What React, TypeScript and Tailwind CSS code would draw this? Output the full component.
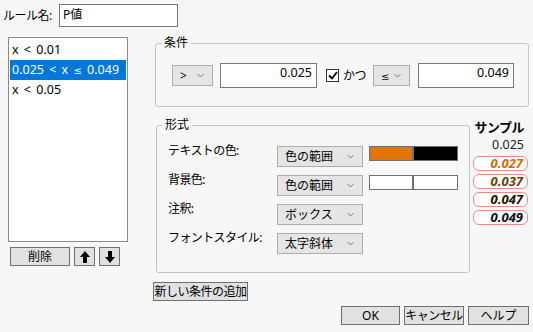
import React from "react";

const font = { fontFamily: '"Noto Sans", "Noto Sans CJK JP", sans-serif' };

const Chevron = () => (
  <svg width="7" height="5" viewBox="0 0 7 5" className="shrink-0">
    <path d="M0.5 1 L3.5 4 L6.5 1" fill="none" stroke="#7a7a7a" strokeWidth="1" />
  </svg>
);

const Le = () => <span className="font-['DejaVu_Sans'] text-[10px]">≤</span>;

const Select = ({ label, w }: { label: React.ReactNode; w: string }) => (
  <div
    className={`${w} h-[21px] flex items-center justify-between pl-[7px] pr-[8px] bg-[#e5e5e5] border border-[#adadad] text-[12px] leading-none text-black`}
  >
    <span>{label}</span>
    <Chevron />
  </div>
);

const Arrow = ({ down }: { down?: boolean }) => (
  <svg width="10" height="12" viewBox="0 0 10 12" className={down ? "rotate-180" : ""}>
    <path d="M5 0 L10 6 L7 6 L7 12 L3 12 L3 6 L0 6 Z" fill="#000" />
  </svg>
);

const Btn = ({ children, w }: { children: React.ReactNode; w: string }) => (
  <div
    className={`${w} h-[19px] flex items-center justify-center bg-[#e1e1e1] border border-[#707070] text-[12px] leading-none text-black`}
  >
    {children}
  </div>
);

const samples = [
  { v: "0.027", c: "text-[#d46a00]" },
  { v: "0.037", c: "text-[#6e3c05]" },
  { v: "0.047", c: "text-[#1a1005]" },
  { v: "0.049", c: "text-[#0a0a1a]" },
];

export default function App() {
  return (
    <div style={font} className="w-[533px] h-[332px] bg-[#f7f7f7] text-[12px] text-black overflow-hidden">
      {/* rule name */}
      <div className="flex items-center pt-[4px] pl-[3px]">
        <span className="w-[56px] tracking-[-0.5px]">ルール名:</span>
        <div className="w-[119px] h-[23px] bg-white border border-[#7a7a7a] pl-[3px] leading-[19px]">P値</div>
      </div>

      <div className="flex mt-[10px]">
        {/* left column */}
        <div className="ml-[8px] w-[120px]">
          <div className="h-[205px] bg-white border border-[#8a8a8a] p-[1px] pt-[2px] text-[12.5px] [word-spacing:2px]">
            <div className="h-[20px] leading-[20px] pl-[2px]">x &lt; 0.01</div>
            <div className="h-[20px] leading-[20px] pl-[2px] bg-[#0078d7] text-white">
              0.025 &lt; x <Le /> 0.049
            </div>
            <div className="h-[20px] leading-[20px] pl-[2px]">x &lt; 0.05</div>
          </div>
          <div className="flex items-center mt-[5px] ml-[2px] gap-[4px]">
            <Btn w="w-[60px]">削除</Btn>
            <div className="w-[21px] h-[19px] flex items-center justify-center bg-[#e1e1e1] border border-[#707070]">
              <Arrow />
            </div>
            <div className="w-[21px] h-[19px] flex items-center justify-center bg-[#e1e1e1] border border-[#707070]">
              <Arrow down />
            </div>
          </div>
        </div>

        {/* right column */}
        <div className="ml-[27px] w-[374px] -mt-[2px]">
          <fieldset className="border border-[#c6c6c6] rounded-[3px] h-[72px]">
            <legend className="ml-[5px] px-[3px] leading-[16px]">条件</legend>
            <div className="flex items-center mt-[12px] ml-[16px]">
              <Select label=">" w="w-[41px]" />
              <div className="ml-[7px] w-[97px] h-[25px] bg-white border border-[#7a7a7a] text-right pr-[4px] leading-[18px] text-[12.5px]">0.025</div>
              <div className="ml-[9px] w-[13px] h-[13px] bg-white border border-[#333] flex items-center justify-center">
                <svg width="10" height="9" viewBox="0 0 10 9">
                  <path d="M1 4.5 L4 7.5 L9 1" fill="none" stroke="#000" strokeWidth="1.8" />
                </svg>
              </div>
              <span className="ml-[4px] tracking-[-0.5px]">かつ</span>
              <div className="ml-[7px]">
                <Select label={<Le />} w="w-[37px]" />
              </div>
              <div className="ml-[8px] w-[96px] h-[25px] bg-white border border-[#7a7a7a] text-right pr-[4px] leading-[18px] text-[12.5px]">0.049</div>
            </div>
          </fieldset>

          <div className="flex mt-[10px]">
            <fieldset className="ml-[1px] w-[314px] h-[156px] border border-[#c6c6c6] rounded-[3px]">
              <legend className="ml-[5px] px-[3px] leading-[16px]">形式</legend>
              <div className="flex flex-col gap-[8px] mt-[13px] ml-[11px]">
                <div className="flex items-start">
                  <span className="w-[109px] -mt-[3px] leading-[16px] tracking-[-0.6px]">テキストの色:</span>
                  <Select label="色の範囲" w="w-[86px]" />
                  <div className="ml-[6px] w-[89px] h-[15px] flex border border-[#707070]">
                    <div className="w-[44px] bg-[#e37400] border-r-2 border-[#707070]" />
                    <div className="flex-1 bg-black" />
                  </div>
                </div>
                <div className="flex items-start">
                  <span className="w-[109px] -mt-[3px] leading-[16px] tracking-[-0.6px]">背景色:</span>
                  <Select label="色の範囲" w="w-[86px]" />
                  <div className="ml-[6px] w-[89px] h-[15px] flex border border-[#707070]">
                    <div className="w-[44px] bg-white border-r-2 border-[#707070]" />
                    <div className="flex-1 bg-white" />
                  </div>
                </div>
                <div className="flex items-start">
                  <span className="w-[109px] -mt-[3px] leading-[16px] tracking-[-0.6px]">注釈:</span>
                  <Select label="ボックス" w="w-[86px]" />
                </div>
                <div className="flex items-start">
                  <span className="w-[109px] -mt-[3px] leading-[16px] tracking-[-0.6px]">フォントスタイル:</span>
                  <Select label="太字斜体" w="w-[86px]" />
                </div>
              </div>
            </fieldset>

            {/* sample column */}
            <div className="ml-[3px] w-[55px] flex flex-col items-end">
              <div className="pr-[4px] mt-[2px] font-bold text-[13px] leading-[16px] tracking-[-0.5px]">サンプル</div>
              <div className="pr-[4px] mt-[2px] leading-[16px] text-[12.5px] text-[#222]">0.025</div>
              <div className="flex flex-col gap-[3px] mt-[3px] w-[55px]">
                {samples.map((s) => (
                  <div
                    key={s.v}
                    className={`h-[15px] bg-white border border-[#f08a8a] rounded-[6px] text-right pr-[4px] leading-[13px] font-bold italic text-[13px] ${s.c}`}
                  >
                    {s.v}
                  </div>
                ))}
              </div>
            </div>
          </div>

          <div className="mt-[9px] -ml-[2px]">
            <Btn w="w-[95px]">
              <span className="tracking-[-0.5px]">新しい条件の追加</span>
            </Btn>
          </div>
        </div>
      </div>

      <div className="flex justify-end gap-[4px] pr-[4px] mt-[5px]">
        <Btn w="w-[59px]">OK</Btn>
        <Btn w="w-[60px]">
          <span className="tracking-[-0.5px]">キャンセル</span>
        </Btn>
        <Btn w="w-[61px]">ヘルプ</Btn>
      </div>
    </div>
  );
}
